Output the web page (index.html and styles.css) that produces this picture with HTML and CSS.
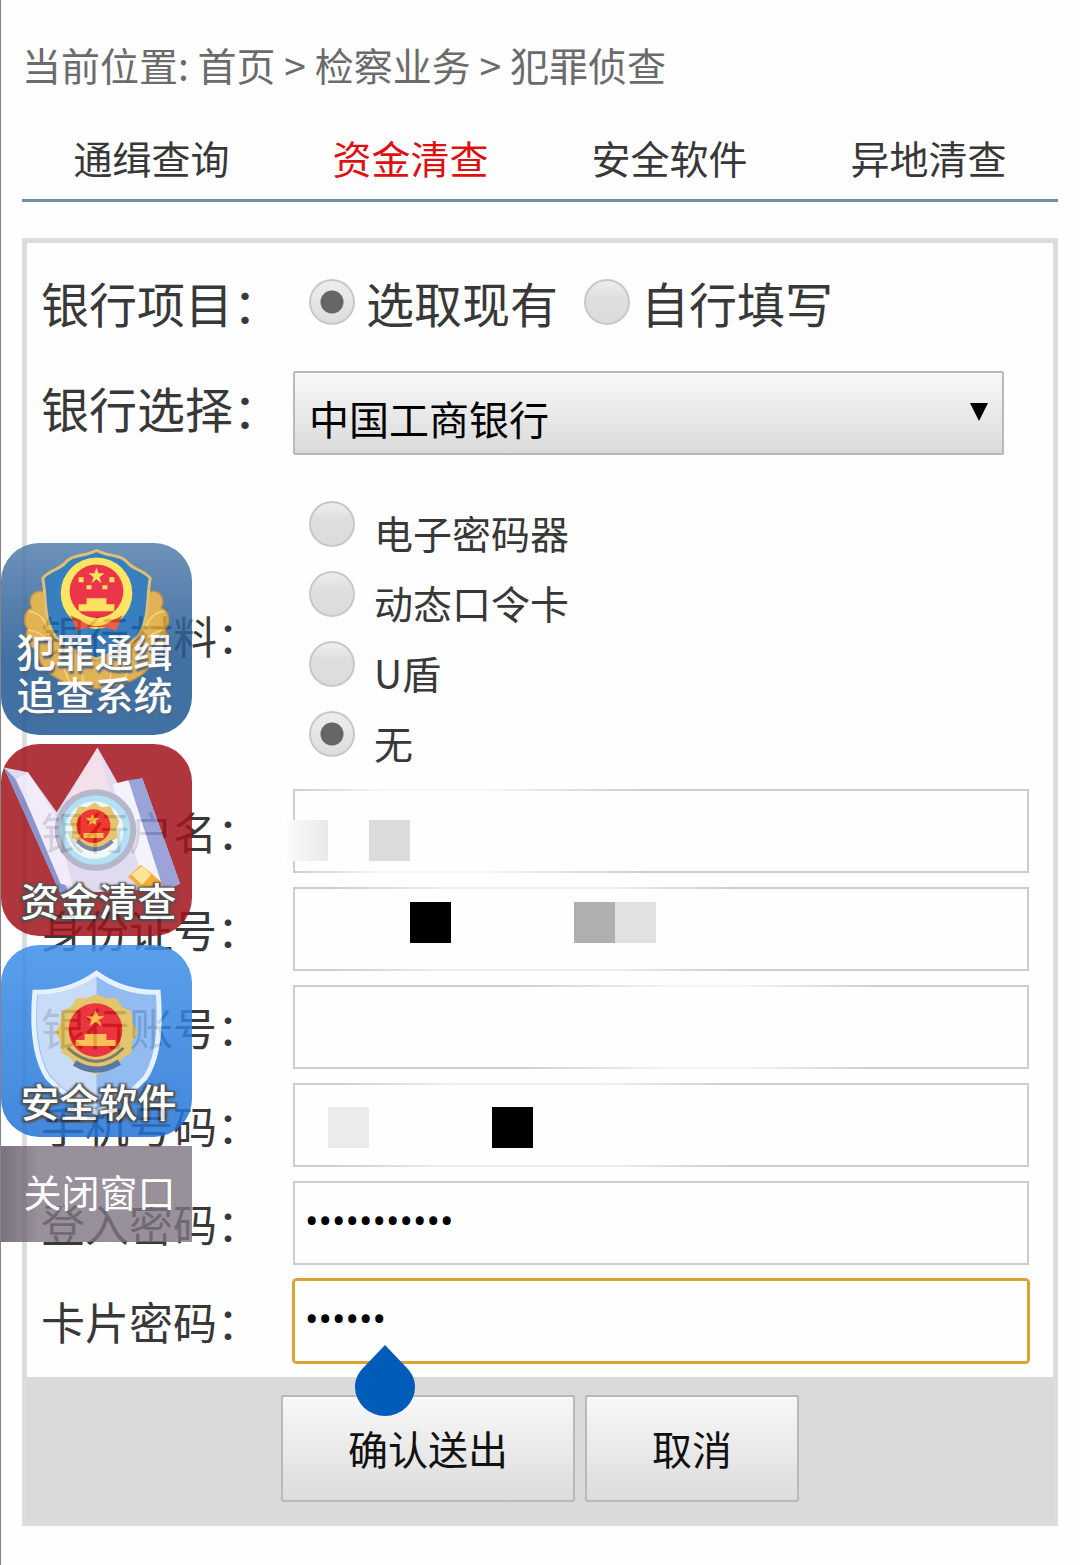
FILE: index.html
```html
<!DOCTYPE html>
<html lang="zh-CN">
<head>
<meta charset="utf-8">
<meta name="viewport" content="width=device-width">
<title>资金清查</title>
<link rel="stylesheet" href="styles.css">
</head>
<body>
<div class="page">
  <nav class="crumbs">当前位置: <a href="#">首页</a> &gt; <a href="#">检察业务</a> &gt; <a href="#">犯罪侦查</a></nav>
  <nav class="tabs">
    <a href="#">通缉查询</a>
    <a href="#" class="current">资金清查</a>
    <a href="#">安全软件</a>
    <a href="#">异地清查</a>
  </nav>

  <main class="panel">
    <div class="rows">
      <div class="row row-source">
        <span class="label label-big">银行项目：</span>
        <div class="choices">
          <label><input type="radio" name="source" checked>选取现有</label>
          <label><input type="radio" name="source">自行填写</label>
        </div>
      </div>
      <div class="row row-bank">
        <label class="label label-big" for="bank">银行选择：</label>
        <div class="select-box">
          <select id="bank"><option>中国工商银行</option></select>
          <svg class="arrow" viewBox="0 0 18 18"><path d="M0 0H18L9 18Z"/></svg>
        </div>
      </div>
      <div class="row row-device">
        <span class="label">银行材料：</span>
        <div class="options">
          <label><input type="radio" name="device"><span>电子密码器</span></label>
          <label><input type="radio" name="device"><span>动态口令卡</span></label>
          <label><input type="radio" name="device"><span>U盾</span></label>
          <label><input type="radio" name="device" checked><span>无</span></label>
        </div>
      </div>
      <div class="fields">
        <div class="row">
          <label class="label" for="holder">银行户名：</label>
          <div class="field"><input class="fade-left" id="holder" type="text" autocomplete="off"><i class="mask mask-edge"></i><i class="mask mask-c2 tone-light"></i></div>
        </div>
        <div class="row">
          <label class="label" for="idno">身份证号：</label>
          <div class="field field-id"><input class="fade-mid" id="idno" type="text" autocomplete="off"><i class="mask mask-c3 tone-black"></i><i class="mask mask-c7 tone-mid"></i><i class="mask mask-c8 tone-pale"></i></div>
        </div>
        <div class="row">
          <label class="label" for="account">银行账号：</label>
          <div class="field"><input class="fade-right" id="account" type="text" autocomplete="off"></div>
        </div>
        <div class="row">
          <label class="label" for="phone">手机号码：</label>
          <div class="field field-phone"><input class="fade-mid" id="phone" type="text" autocomplete="off"><i class="mask mask-c1 tone-faint"></i><i class="mask mask-c5 tone-black"></i></div>
        </div>
        <div class="row">
          <label class="label" for="login">登入密码：</label>
          <div class="field"><input id="login" type="password" value="***********" autocomplete="off"></div>
        </div>
        <div class="row">
          <label class="label" for="card">卡片密码：</label>
          <div class="field"><input class="active" id="card" type="password" value="******" autocomplete="off">
            <svg class="handle" viewBox="0 0 60 71"><path d="M30 0L50 21C57 28 60 34 60 42A30 29 0 0 1 0 42C0 34 3 28 10 21Z"/></svg>
          </div>
        </div>
      </div>
    </div>
    <div class="actions">
      <button type="button" class="send">确认送出</button>
      <button type="button" class="cancel">取消</button>
    </div>
  </main>

  <aside class="float">
    <a href="#" class="tile tile-wanted">
      <svg viewBox="0 0 192 192">
        <g fill="#dda637" stroke="#b98024" stroke-width="1.5">
          <path d="M46 50C34 44 26 54 31 65C22 68 22 80 27 86C22 95 29 104 36 107C38 128 60 144 96 146C132 144 154 128 157 107C164 104 170 95 165 86C170 80 170 68 161 65C166 54 158 44 146 50L140 96L96 118L52 96Z"/>
          <path d="M28 68Q42 70 46 84M27 87Q40 88 48 99M164 68Q150 70 146 84M165 87Q152 88 144 99M60 118L70 142M80 122L84 146M112 122L108 146M132 118L122 142" fill="none" stroke="#f4cf69"/>
        </g>
        <path d="M96 7C82 14 72 10 64 20C57 27 48 27 42 35C46 56 42 76 55 94Q70 108 96 116Q122 108 137 94C150 76 146 56 150 35C144 27 135 27 128 20C120 10 110 14 96 7Z" fill="#1669b5" stroke="#d9b65c" stroke-width="3"/>
        <circle cx="96" cy="50" r="36" fill="#ffe14a"/>
        <circle cx="96" cy="48" r="27" fill="#e8142a"/>
        <path d="M96 24l2 6h6l-5 4 2 6-5-4-5 4 2-6-5-4h6ZM78 34h5v5h-5ZM109 34h5v5h-5ZM86 42h5v4h-5ZM102 42h5v4h-5ZM86 55h20v6h8v7H78v-7h8Z" fill="#ffdb47"/>
        <path d="M70 72Q96 88 122 72L116 88Q96 80 76 88Z" fill="#e2452d"/>
        <path d="M82 76Q96 86 110 76" stroke="#ffcf3e" stroke-width="4" fill="none"/>
      </svg>
      <span>犯罪通缉<br>追查系统</span>
    </a>
    <a href="#" class="tile tile-funds">
      <svg viewBox="0 0 192 192">
        <path d="M3 23L60 150L168 145L180 140L142 34L118 40L97 3L56 68L27 28Z" fill="#ddd5ed"/>
        <path d="M3 23L14 34L68 148L60 151Z" fill="#7883c5"/>
        <path d="M27 28L54 70L72 143L60 140L16 35Z" fill="#f1eafa"/>
        <path d="M97 3L110 48L62 64Z" fill="#f2dbe7"/>
        <path d="M128 36L142 34L180 140L163 145Z" fill="#8995d3"/>
        <path d="M112 40L128 36L163 145L146 144Z" fill="#f4f0fb"/>
        <circle cx="95" cy="86" r="38" fill="#a8dcf4" stroke="#a9abc4" stroke-width="6"/>
        <circle cx="94" cy="86" r="29" fill="#edf8f5"/>
        <path d="M94 58l7 5 9-1 4 8 5 7-3 8 1 9-8 4-5 7-10-1-10 1-5-7-8-4 1-9-3-8 5-7 4-8 9 1Z" fill="#dfbc57"/>
        <circle cx="93" cy="82" r="17" fill="#ed1911"/>
        <path d="M92 70l2 4h5l-4 3 1 4-4-2-4 2 1-4-4-3h5ZM83 89h20v5H83Z" fill="#ffb635"/>
        <path d="M77 97Q94 114 112 97" fill="none" stroke="#697292" stroke-width="4"/>
        <path d="M128 133L141 121L162 139L150 154Z" fill="#f5a010"/>
        <path d="M131 131L142 122L151 131L142 141Z" fill="#ffe18c"/>
      </svg>
      <span>资金清查</span>
    </a>
    <a href="#" class="tile tile-safe">
      <svg viewBox="0 0 192 192">
        <path d="M96 28Q124 48 158 47Q163 106 145 133Q127 153 96 168Q65 153 47 133Q29 106 34 47Q68 48 96 28Z" fill="#80b0ef" stroke="#e1efff" stroke-width="5"/>
        <path d="M96 31Q71 48 37 50Q33 103 49 130Q65 149 96 164Z" fill="#c0d7f6"/>
        <path d="M96 49l10 4 10 0 6 9 9 4 1 11 5 10-5 10-1 11-9 5-6 9-10 3-10 5-10-5-10-3-6-9-9-5-1-11-5-10 5-10 1-11 9-4 6-9 10 0Z" fill="#dfbd52"/>
        <circle cx="95" cy="85" r="27" fill="#e7141d"/>
        <path d="M95 65l3 6h6l-5 4 2 6-6-4-6 4 2-6-5-4h6ZM84 89h22v6h9v6H75v-6h9Z" fill="#ffb33b"/>
        <path d="M67 103Q96 130 123 103" fill="none" stroke="#686656" stroke-width="3"/>
        <path d="M74 118Q96 132 119 117" fill="none" stroke="#3f6192" stroke-width="6"/>
      </svg>
      <span>安全软件</span>
    </a>
    <button type="button" class="close">关闭窗口</button>
  </aside>
</div>
</body>
</html>
```

FILE: styles.css
```css
* { box-sizing: border-box; }

body {
  margin: 0;
  background: #fefefe;
  color: #383838;
  font-family: "Noto Sans CJK SC", sans-serif;
  font-size: 39px;
}

a { color: inherit; text-decoration: none; }

.page {
  position: relative;
  padding: 36px 22px 39px 21px;
  border-left: 1px solid #858585;
}

.crumbs {
  color: #6b6b6b;
  line-height: 56px;
  white-space: nowrap;
}

.tabs {
  display: grid;
  grid-template-columns: repeat(4, 1fr);
  margin-top: 25px;
  padding-bottom: 2px;
  border-bottom: 3px solid #6f909c;
  line-height: 80px;
  text-align: center;
}

.tabs .current { color: #dc1114; }

.panel {
  margin-top: 36px;
  border: 5px solid #dcdcdc;
}

.rows { padding: 0 24px 14px 14px; }

.row {
  display: grid;
  grid-template-columns: 252px 1fr;
  align-items: center;
}

.label { font-size: 44px; line-height: 64px; white-space: nowrap; }
.label-big { font-size: 48px; }

.row-source { height: 118px; }
.row-bank { height: 104px; }
.row-bank .label { padding-bottom: 12px; }
.row-device { margin-top: 24px; }
.row-device .label { padding-top: 12px; }

input[type="radio"] {
  appearance: none;
  flex: none;
  width: 46px;
  height: 46px;
  margin: 0;
  border: 2px solid #c8c8c8;
  border-radius: 50%;
  background: linear-gradient(#eeeeee, #dedede 40%, #dcdcdc);
}

input[type="radio"]:checked {
  background: radial-gradient(circle, #666 11px, transparent 12px), linear-gradient(#eeeeee, #dcdcdc);
}

.choices {
  display: flex;
  gap: 26px;
  padding-left: 16px;
  font-size: 48px;
  line-height: 64px;
}

.choices label { display: flex; align-items: center; gap: 11px; white-space: nowrap; }

.options { padding-left: 16px; }
.options label { display: flex; align-items: center; gap: 19px; height: 70px; }
.options span { padding-top: 16px; line-height: 54px; }

.select-box { position: relative; margin-right: 25px; }

select {
  appearance: none;
  display: block;
  width: 100%;
  height: 84px;
  padding: 10px 14px 0;
  border: 2px solid #b9b9b9;
  border-radius: 2px;
  background: linear-gradient(#f8f8f8, #dadada);
  color: #000;
  font: 40px "Noto Sans CJK SC", sans-serif;
}

.arrow {
  position: absolute;
  top: 32px;
  right: 16px;
  width: 18px;
  height: 18px;
  pointer-events: none;
}

.fields { display: grid; gap: 14px; margin-top: 20px; }
.field { position: relative; }

.field input {
  display: block;
  width: 100%;
  height: 84px;
  padding: 0 10px 2px;
  border: 2px solid #cdcdcd;
  background: #fefefe;
  color: #000;
  font: 40px Roboto, "Noto Sans CJK SC", sans-serif;
  outline: none;
}

.field .fade-left { border-image: linear-gradient(90deg, #cdcdcd, #f6f6f6 12%, #f6f6f6 26%, #cdcdcd 48%) 2; }
.field .fade-mid { border-image: linear-gradient(90deg, #cdcdcd 5%, #f0f0f0 22%, #f0f0f0 42%, #cdcdcd 60%) 2; }
.field .fade-right { border-image: linear-gradient(90deg, #cdcdcd 30%, #f2f2f2 50%, #f2f2f2 62%, #cdcdcd 80%) 2; }

.field .active {
  border-color: #d9a437;
  border-radius: 3px;
  outline: 1px solid #d9a437;
}

/* redaction blocks, on a 41px mosaic */
.mask { position: absolute; top: 31px; width: 41px; height: 41px; }
.field-id .mask { top: 15px; }
.field-phone .mask { top: 24px; }
.mask-edge { left: -6px; background: linear-gradient(90deg, #fbfbfb, #e9e9e9); }
.mask-c1 { left: 35px; }
.mask-c2 { left: 76px; }
.mask-c3 { left: 117px; }
.mask-c5 { left: 199px; }
.mask-c7 { left: 281px; }
.mask-c8 { left: 322px; }
.tone-black { background: #000; }
.tone-mid { background: #afafaf; }
.tone-light { background: #dcdcdc; }
.tone-pale { background: #e1e1e1; }
.tone-faint { background: #ebebeb; }

.handle {
  position: absolute;
  z-index: 1;
  top: 66px;
  left: 62px;
  width: 60px;
  height: 71px;
  fill: #005bb9;
}

.actions {
  display: flex;
  justify-content: center;
  gap: 10px;
  padding: 18px 0 19px;
  background: #dadada;
}

.actions button {
  height: 107px;
  padding: 0 65px 2px;
  border: 2px solid #b9b9b9;
  border-radius: 2px;
  background: linear-gradient(#f8f8f8, #dcdcdc);
  color: #111;
  font: 40px "Noto Sans CJK SC", sans-serif;
}

/* shortcut tiles floating over the form */
.float {
  position: absolute;
  top: 543px;
  left: 0;
  display: grid;
  gap: 9px;
  width: 191px;
}

.tile {
  position: relative;
  height: 192px;
  border-radius: 38px;
  overflow: hidden;
  opacity: 0.85;
}

.tile svg { display: block; width: 100%; height: 100%; }

.tile span {
  position: absolute;
  left: 4px;
  right: 0;
  bottom: 15px;
  color: #fff;
  font-weight: 500;
  line-height: 43px;
  text-align: center;
  text-shadow: 2px 2px 2px #333, -2px -1px 2px #333, 2px -1px 2px #333, -2px 2px 2px #333;
}

.tile-wanted { background: linear-gradient(#557fae, #215993 60%, #215993); }
.tile-wanted span { right: 8px; bottom: 20px; text-shadow: 1px 3px 2px #334d70; }
.tile-funds { background: #a3141d; }
.tile-safe { background: linear-gradient(#3e8fe9, #2373d6); }

.close {
  height: 96px;
  padding: 0 0 8px 6px;
  border: 0;
  background: linear-gradient(90deg, rgba(88, 80, 92, 0.8), rgba(126, 117, 130, 0.8) 20%);
  color: #fff;
  font: 38px "Noto Sans CJK SC", sans-serif;
}
```
